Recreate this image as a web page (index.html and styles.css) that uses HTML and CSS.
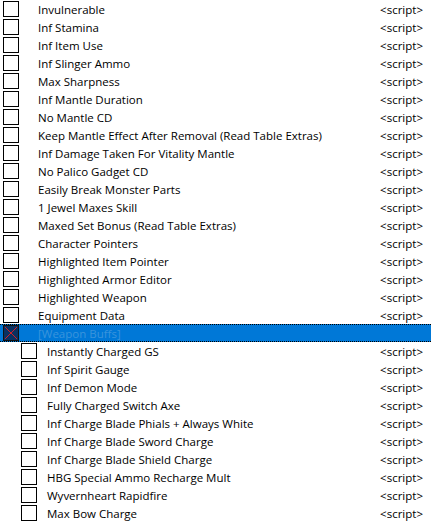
FILE: index.html
```html
<html lang="en">
<head>
    <meta charset="UTF-8">
    <title>Cheat Table</title>
    <link rel="stylesheet" href="styles.css">
</head>
<body>
    <div class="lista">
        <div class="linha"><span class="caixa"></span><span class="nome">Invulnerable</span><span class="valor">&lt;script&gt;</span></div>
        <div class="linha"><span class="caixa"></span><span class="nome">Inf Stamina</span><span class="valor">&lt;script&gt;</span></div>
        <div class="linha"><span class="caixa"></span><span class="nome">Inf Item Use</span><span class="valor">&lt;script&gt;</span></div>
        <div class="linha"><span class="caixa"></span><span class="nome">Inf Slinger Ammo</span><span class="valor">&lt;script&gt;</span></div>
        <div class="linha"><span class="caixa"></span><span class="nome">Max Sharpness</span><span class="valor">&lt;script&gt;</span></div>
        <div class="linha"><span class="caixa"></span><span class="nome">Inf Mantle Duration</span><span class="valor">&lt;script&gt;</span></div>
        <div class="linha"><span class="caixa"></span><span class="nome">No Mantle CD</span><span class="valor">&lt;script&gt;</span></div>
        <div class="linha"><span class="caixa"></span><span class="nome">Keep Mantle Effect After Removal (Read Table Extras)</span><span class="valor">&lt;script&gt;</span></div>
        <div class="linha"><span class="caixa"></span><span class="nome">Inf Damage Taken For Vitality Mantle</span><span class="valor">&lt;script&gt;</span></div>
        <div class="linha"><span class="caixa"></span><span class="nome">No Palico Gadget CD</span><span class="valor">&lt;script&gt;</span></div>
        <div class="linha"><span class="caixa"></span><span class="nome">Easily Break Monster Parts</span><span class="valor">&lt;script&gt;</span></div>
        <div class="linha"><span class="caixa"></span><span class="nome">1 Jewel Maxes Skill</span><span class="valor">&lt;script&gt;</span></div>
        <div class="linha"><span class="caixa"></span><span class="nome">Maxed Set Bonus (Read Table Extras)</span><span class="valor">&lt;script&gt;</span></div>
        <div class="linha"><span class="caixa"></span><span class="nome">Character Pointers</span><span class="valor">&lt;script&gt;</span></div>
        <div class="linha"><span class="caixa"></span><span class="nome">Highlighted Item Pointer</span><span class="valor">&lt;script&gt;</span></div>
        <div class="linha"><span class="caixa"></span><span class="nome">Highlighted Armor Editor</span><span class="valor">&lt;script&gt;</span></div>
        <div class="linha"><span class="caixa"></span><span class="nome">Highlighted Weapon</span><span class="valor">&lt;script&gt;</span></div>
        <div class="linha"><span class="caixa"></span><span class="nome">Equipment Data</span><span class="valor">&lt;script&gt;</span></div>
        <div class="linha selecionada">
            <span class="caixa marcada">
                <svg width="16" height="16" viewBox="0 0 16 16"><path d="M2 2 L14 14 M14 2 L2 14" stroke="#d0202a" stroke-width="1"/></svg>
            </span>
            <span class="nome">[Weapon Buffs]</span>
        </div>
        <div class="linha filho"><span class="caixa"></span><span class="nome">Instantly Charged GS</span><span class="valor">&lt;script&gt;</span></div>
        <div class="linha filho"><span class="caixa"></span><span class="nome">Inf Spirit Gauge</span><span class="valor">&lt;script&gt;</span></div>
        <div class="linha filho"><span class="caixa"></span><span class="nome">Inf Demon Mode</span><span class="valor">&lt;script&gt;</span></div>
        <div class="linha filho"><span class="caixa"></span><span class="nome">Fully Charged Switch Axe</span><span class="valor">&lt;script&gt;</span></div>
        <div class="linha filho"><span class="caixa"></span><span class="nome">Inf Charge Blade Phials + Always White</span><span class="valor">&lt;script&gt;</span></div>
        <div class="linha filho"><span class="caixa"></span><span class="nome">Inf Charge Blade Sword Charge</span><span class="valor">&lt;script&gt;</span></div>
        <div class="linha filho"><span class="caixa"></span><span class="nome">Inf Charge Blade Shield Charge</span><span class="valor">&lt;script&gt;</span></div>
        <div class="linha filho"><span class="caixa"></span><span class="nome">HBG Special Ammo Recharge Mult</span><span class="valor">&lt;script&gt;</span></div>
        <div class="linha filho"><span class="caixa"></span><span class="nome">Wyvernheart Rapidfire</span><span class="valor">&lt;script&gt;</span></div>
        <div class="linha filho"><span class="caixa"></span><span class="nome">Max Bow Charge</span><span class="valor">&lt;script&gt;</span></div>
    </div>
</body>
</html>
```

FILE: styles.css
```css
body {
    margin: 0;
    background-color: #fff;
    font-family: "Open Sans", "Noto Sans", sans-serif;
    font-size: 11.5px;
    color: #000;
}
.lista {
    display: flex;
    flex-direction: column;
}
.linha {
    display: flex;
    align-items: center;
    height: 18px;
    padding-left: 3px;
    padding-right: 8px;
}
.linha.filho {
    padding-left: 21px;
}
.caixa {
    box-sizing: border-box;
    width: 16px;
    height: 16px;
    border: 1px solid #000;
    background-color: #fff;
    flex-shrink: 0;
}
.caixa.marcada {
    background-color: #0a3060;
    border-color: #111;
    position: relative;
}
.caixa.marcada svg {
    position: absolute;
    top: -1px;
    left: -1px;
}
.nome {
    margin-left: 19px;
    white-space: nowrap;
    flex: 1;
}
.filho .nome {
    margin-left: 10px;
}
.valor {
    white-space: nowrap;
}
.selecionada {
    background-color: #0078d7;
    border-top: 1px dotted #000;
    border-bottom: 1px dotted #000;
    height: 16px;
}
.selecionada .nome {
    color: #3a94dc;
}
```
